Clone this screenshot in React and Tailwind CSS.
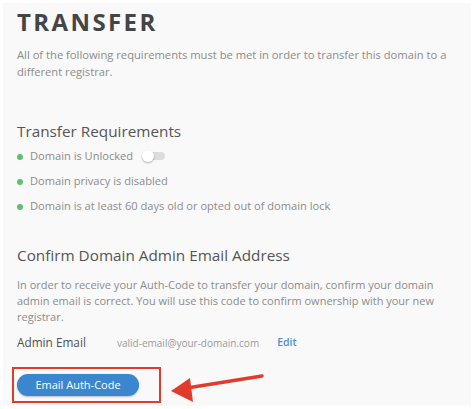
import React from 'react';

const font = { fontFamily: '"Open Sans", "Liberation Sans", sans-serif' };

const Requirement = ({ children }) => (
  <li className="flex items-center h-[25px]">
    <span className="w-[6px] h-[6px] rounded-full bg-[#5fbf6a] mr-[7px]" />
    <span className="flex items-center text-[11.1px] text-[#8c8c8c]">{children}</span>
  </li>
);

const Toggle = () => (
  <span className="relative ml-[9px] inline-flex items-center w-[23px] h-[12px]">
    <span className="absolute left-[5px] right-0 h-[8px] rounded-full bg-[#dcdcdc]" />
    <span className="absolute left-0 w-[12px] h-[12px] rounded-full bg-white shadow-[0_1px_2px_rgba(0,0,0,0.3)]" />
  </span>
);

export default function App() {
  return (
    <div className="w-[474px] h-[409px] bg-white p-[3px]" style={font}>
      <div className="h-full bg-[#f9f9f9] pl-[14px] pr-[10px] pt-[4px]">
        <h1 className="text-[24px] leading-[30px] font-bold tracking-[2.4px] text-[#454545]">TRANSFER</h1>
        <p className="mt-[10px] text-[11.2px] leading-[16.5px] text-[#8c8c8c] whitespace-nowrap">
          All of the following requirements must be met in order to transfer this domain to a
          <br />
          different registrar.
        </p>

        <h2 className="mt-[41px] text-[15.3px] leading-[20px] text-[#555]">Transfer Requirements</h2>
        <ul className="mt-[3px]">
          <Requirement>
            Domain is Unlocked
            <Toggle />
          </Requirement>
          <Requirement>Domain privacy is disabled</Requirement>
          <Requirement>Domain is at least 60 days old or opted out of domain lock</Requirement>
        </ul>

        <h2 className="mt-[26px] text-[15.3px] leading-[20px] text-[#555]">Confirm Domain Admin Email Address</h2>
        <p className="mt-[12px] text-[11px] leading-[16px] text-[#8c8c8c] whitespace-nowrap">
          In order to receive your Auth-Code to transfer your domain, confirm your domain
          <br />
          admin email is correct. You will use this code to confirm ownership with your new
          <br />
          registrar.
        </p>

        <div className="mt-[10px] flex items-center h-[16px]">
          <span className="w-[100px] text-[11.8px] text-[#505050]">Admin Email</span>
          <span className="text-[10px] text-[#999]">valid-email@your-domain.com</span>
          <button className="ml-[18px] text-[10.5px] font-semibold text-[#4a8fd6]">Edit</button>
        </div>

        <div className="mt-[16px] flex -ml-[5px]">
          <div className="border-2 border-[#e23b2e] pl-[3px] pr-[20px] py-[5px]">
            <button className="block w-[122px] h-[22px] rounded-full bg-[#3a86cf] text-white text-[11px] shadow-[0_1px_2px_rgba(0,0,0,0.25)]">
              Email Auth-Code
            </button>
          </div>
          <svg width="100" height="36" viewBox="0 0 100 36" className="ml-[4px]">
            <line x1="97" y1="9" x2="22" y2="21" stroke="#e23b2e" strokeWidth="3.5" strokeLinecap="round" />
            <polygon points="6,24 25,11 28,35" fill="#e23b2e" />
          </svg>
        </div>
      </div>
    </div>
  );
}
